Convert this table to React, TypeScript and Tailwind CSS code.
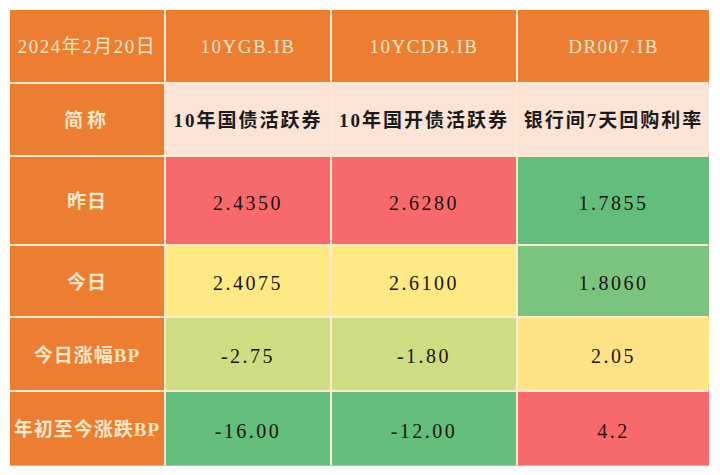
const ORANGE = "bg-[#ed7d31]";

type Cell = { text: string; bg: string };

const headers = ["2024年2月20日", "10YGB.IB", "10YCDB.IB", "DR007.IB"];
const names = ["10年国债活跃券", "10年国开债活跃券", "银行间7天回购利率"];

const rows: { label: string; h: string; cells: Cell[] }[] = [
  {
    label: "昨日",
    h: "h-[87px]",
    cells: [
      { text: "2.4350", bg: "bg-[#f8696b]" },
      { text: "2.6280", bg: "bg-[#f8696b]" },
      { text: "1.7855", bg: "bg-[#63be7b]" },
    ],
  },
  {
    label: "今日",
    h: "h-[70px]",
    cells: [
      { text: "2.4075", bg: "bg-[#ffe984]" },
      { text: "2.6100", bg: "bg-[#ffe984]" },
      { text: "1.8060", bg: "bg-[#7bc47e]" },
    ],
  },
  {
    label: "今日涨幅BP",
    h: "h-[72px]",
    cells: [
      { text: "-2.75", bg: "bg-[#cfdd82]" },
      { text: "-1.80", bg: "bg-[#cfdd82]" },
      { text: "2.05", bg: "bg-[#ffe283]" },
    ],
  },
  {
    label: "年初至今涨跌BP",
    h: "h-[73px]",
    cells: [
      { text: "-16.00", bg: "bg-[#63be7b]" },
      { text: "-12.00", bg: "bg-[#63be7b]" },
      { text: "4.2", bg: "bg-[#f8696b]" },
    ],
  },
];

const serif = "font-['Liberation_Serif','Noto_Sans_CJK_SC',serif]";

export default function App() {
  return (
    <div className="w-[720px] h-[475px] bg-white p-[10px]">
      <div className="grid w-[699px] grid-cols-[154px_164px_184px_191px] gap-[2px] bg-[#fce9cf] border-r border-b border-[#e2b47f]">
        {/* header row */}
        {headers.map((h) => (
          <div
            key={h}
            className={`${ORANGE} h-[72px] pt-[2px] flex items-center justify-center whitespace-nowrap ${serif} text-[19px] tracking-[1.5px] text-[#fbe7c9]`}
          >
            {h}
          </div>
        ))}

        {/* short names */}
        <div className={`${ORANGE} h-[71px] pt-[4px] flex items-center justify-center ${serif} text-[19px] tracking-[4px] font-semibold text-[#fbe7c9]`}>
          简称
        </div>
        {names.map((n) => (
          <div
            key={n}
            className={`bg-[#fbe4d5] h-[71px] pt-[4px] flex items-center justify-center whitespace-nowrap ${serif} text-[19px] tracking-[2px] font-bold text-[#1b1b1b]`}
          >
            {n}
          </div>
        ))}

        {/* values */}
        {rows.map((r) => (
          <>
            <div
              key={r.label}
              className={`${ORANGE} ${r.h} pt-[4px] flex items-center justify-center whitespace-nowrap ${serif} text-[19px] tracking-[1px] font-semibold text-[#fbe7c9]`}
            >
              {r.label}
            </div>
            {r.cells.map((c, j) => (
              <div
                key={r.label + j}
                className={`${c.bg} ${r.h} pt-[4px] flex items-center justify-center ${serif} text-[20px] tracking-[2.5px] text-[#1c1414]`}
              >
                {c.text}
              </div>
            ))}
          </>
        ))}
      </div>
    </div>
  );
}
